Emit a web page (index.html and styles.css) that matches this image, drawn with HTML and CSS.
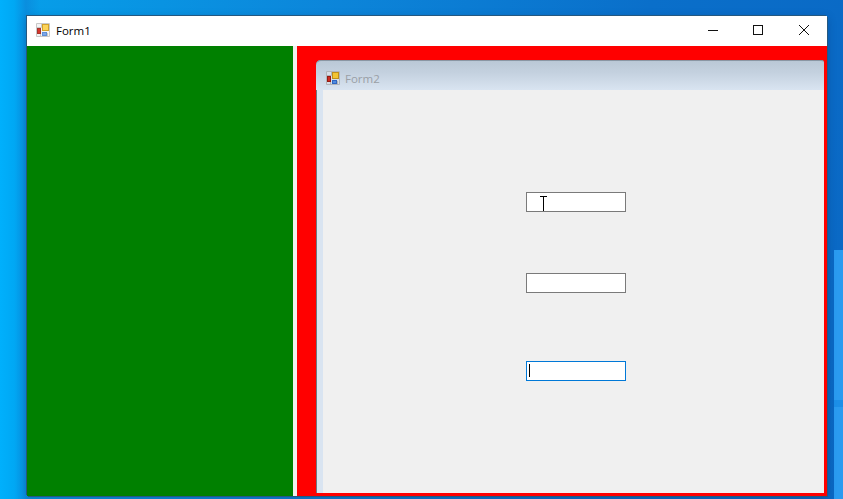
FILE: index.html
```html
<!DOCTYPE html>
<html lang="en">
<head>
  <meta charset="UTF-8">
  <title>Form1</title>
  <link rel="stylesheet" href="styles.css">
</head>
<body>
  <div class="desktop">
    <div class="window">
      <div class="titlebar">
        <svg class="form-icon" width="14" height="14" viewBox="0 0 14 14">
          <path d="M.5.500h13v13H.5z" fill="#f4f4f4" stroke="#c8c8c8"/>
          <path d="M.5 4.500h5M5.500.500v4M4.500 10.500v3M11.500 10v3.500" stroke="#c8c8c8" fill="none"/>
          <rect x="6.500" y="1.500" width="6" height="6" fill="#fcd45a" stroke="#d2a22c"/>
          <rect x="1.500" y="5.500" width="3" height="5" fill="#d8362c" stroke="#a8352c"/>
          <rect x="6.500" y="9.500" width="4" height="3" fill="#7ea8e8" stroke="#5e8ed6"/>
        </svg>
        <span class="form-title">Form1</span>
        <div class="caption-buttons">
          <svg class="caption-btn" width="46" height="30" viewBox="0 0 46 30">
            <path d="M19 14.500h10" stroke="#111" fill="none"/>
          </svg>
          <svg class="caption-btn" width="46" height="30" viewBox="0 0 46 30">
            <rect x="18.500" y="9.500" width="9" height="9" stroke="#111" fill="none"/>
          </svg>
          <svg class="caption-btn" width="46" height="30" viewBox="0 0 46 30">
            <path d="M18 9l10 10M28 9L18 19" stroke="#111" fill="none"/>
          </svg>
        </div>
      </div>
      <div class="client">
        <div class="left-panel"></div>
        <div class="splitter"></div>
        <div class="mdi-panel">
          <div class="child">
            <div class="child-titlebar">
              <svg class="form-icon" width="14" height="14" viewBox="0 0 14 14">
                <path d="M.5.500h13v13H.5z" fill="#d6dee8" stroke="#b0b4ba"/>
                <path d="M.5 4.500h5M5.500.500v4M4.500 10.500v3M11.500 10v3.500" stroke="#b0b4ba" fill="none"/>
                <rect x="6.500" y="1.500" width="6" height="6" fill="#f2c433" stroke="#bf8f1c"/>
                <rect x="1.500" y="5.500" width="3" height="5" fill="#d02a20" stroke="#951a12"/>
                <rect x="6.500" y="9.500" width="4" height="3" fill="#4f8be0" stroke="#2f66c0"/>
              </svg>
              <span class="child-title">Form2</span>
            </div>
            <div class="child-body">
              <div class="textbox textbox-first">
                <span class="ibeam"></span>
              </div>
              <div class="textbox textbox-second"></div>
              <div class="textbox textbox-focused">
                <span class="caret"></span>
              </div>
            </div>
          </div>
        </div>
      </div>
    </div>
  </div>
</body>
</html>
```
FILE: styles.css
```css
* {
  margin: 0;
  padding: 0;
  box-sizing: border-box;
}

html,
body {
  width: 100%;
  height: 100%;
  overflow: hidden;
}

body {
  font-family: "Open Sans", "Noto Sans", "Liberation Sans", sans-serif;
}

.desktop {
  width: 843px;
  height: 499px;
  padding: 16px 0 0 27px;
  overflow: hidden;
  background:
    linear-gradient(#1c8fe8, #1c8fe8) 834px 400px / 9px 7px no-repeat,
    linear-gradient(#2a9bf0, #2a9bf0) 834px 250px / 9px 249px no-repeat,
    linear-gradient(90deg, #00b0fc 0, #00a8f4 14px, #0a8ede 26px, rgba(10, 120, 210, 0) 40px),
    linear-gradient(100deg, #06a0ea 0, #0c86da 35%, #0a6fca 70%, #0a68c4 100%);
}

.window {
  width: 800px;
  height: 480px;
  display: flex;
  flex-direction: column;
  background-color: #fff;
  box-shadow: -1px -1px 0 #25587f, 1px 1px 0 #25587f, 0 2px 8px rgba(0, 40, 90, 0.35);
}

/* Form1 title bar */
.titlebar {
  height: 30px;
  flex-shrink: 0;
  display: flex;
  align-items: center;
  padding-left: 9px;
  padding-bottom: 2px;
  background-color: #fff;
}

.form-title {
  margin-left: 6px;
  font-size: 11.5px;
  color: #000;
}

.caption-buttons {
  margin-left: auto;
  display: flex;
  margin-bottom: -2px;
}

.caption-btn {
  display: block;
}

/* client area */
.client {
  flex: 1;
  display: flex;
  min-height: 0;
}

.left-panel {
  width: 266px;
  background-color: #008000;
}

.splitter {
  width: 4px;
  background-color: #f0f0f0;
}

.mdi-panel {
  flex: 1;
  padding: 14px 3px 3px 19px;
  background-color: #ff0000;
}

/* Form2 child window */
.child {
  height: 100%;
  display: flex;
  flex-direction: column;
  border-top-left-radius: 5px;
  border-top-right-radius: 3px;
  background-color: #d9e4f1;
  box-shadow: inset 1px 1px 0 #6d7883;
}

.child-titlebar {
  height: 30px;
  flex-shrink: 0;
  display: flex;
  align-items: center;
  padding: 5px 0 0 10px;
  border-top-left-radius: 5px;
  border-top-right-radius: 3px;
  border-top: 1px solid #8a96a3;
  background: linear-gradient(180deg, #bac8d6 0, #c4d1df 40%, #d9e4f1 100%);
}

.child-title {
  margin-left: 5px;
  font-size: 11.5px;
  color: #9a9fa6;
}

.child-body {
  flex: 1;
  margin-left: 7px;
  padding: 102px 0 0 203px;
  background-color: #f0f0f0;
}

.textbox {
  position: relative;
  width: 100px;
  height: 20px;
  background-color: #fff;
  border: 1px solid #7a7a7a;
}

.textbox-second {
  margin-top: 61px;
}

.textbox-focused {
  margin-top: 68px;
  border-color: #0078d7;
}

.ibeam {
  position: absolute;
  left: 16px;
  top: 3px;
  width: 1px;
  height: 15px;
  background-color: #000;
}

.ibeam::before {
  content: "";
  position: absolute;
  left: -3px;
  top: 0;
  width: 7px;
  height: 1px;
  background-color: #000;
}

.caret {
  position: absolute;
  left: 2px;
  top: 2px;
  width: 1px;
  height: 13px;
  background-color: #000;
}
```
